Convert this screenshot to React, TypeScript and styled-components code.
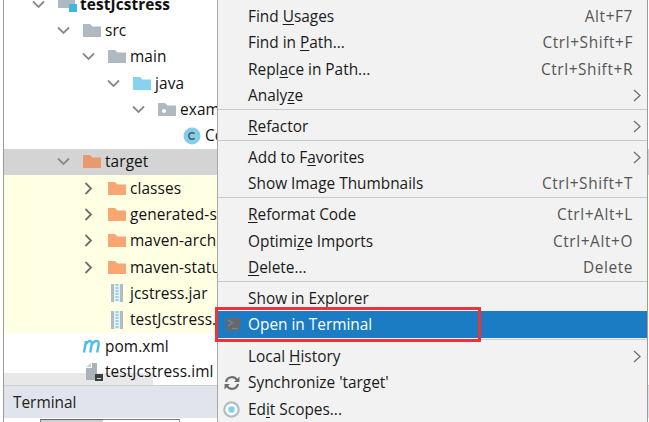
import React from 'react';
import styled, { createGlobalStyle } from 'styled-components';

const Global = createGlobalStyle`
  html, body { margin: 0; padding: 0; background: #fff; }
  body { font-family: "Open Sans", "Noto Sans", sans-serif; }
`;
const Stage = styled.div`
  position: relative; width: 649px; height: 422px; overflow: hidden; background: #fff;
  display: flex; flex-direction: column;
`;
const Project = styled.div`
  flex: 1; min-height: 0; margin-left: 3px; border-left: 1px solid #9a9a9a; margin-top: -9px;
  display: flex; flex-direction: column;
`;
const toneBg: Record<string, string> = {
  sel: '#d4d4d4',
  ex: '#ffffe4',
  scroll: 'linear-gradient(#e8e8e8, #e8e8e8) 0 14px / 149px 12px no-repeat',
};
const Row = styled.div<{ $tone?: string }>`
  height: ${p => p.$tone === 'scroll' ? 25.8 : 26.3}px; flex: none; display: flex; align-items: center;
  white-space: nowrap; overflow: hidden; box-sizing: border-box;
  padding-bottom: ${p => p.$tone === 'scroll' ? 1 : 0}px;
  background: ${p => (p.$tone && toneBg[p.$tone]) || 'transparent'};
`;
const Indent = styled.span<{ $l: number }>`
  flex: none; width: ${p => p.$l}px; display: flex; justify-content: flex-end; align-items: center;
`;
const Name = styled.span<{ $b?: boolean }>`
  font-size: 15.4px; color: #111; margin-left: 4px; letter-spacing: 0.1px; font-weight: ${p => p.$b ? 700 : 400};
`;
const TermBar = styled.div`
  height: 33px; flex: none; box-sizing: border-box; background: #e1e4ec; border-top: 1px solid #cfcfcf;
  display: flex; align-items: center; padding: 1px 0 0 9px; font-size: 15.4px; color: #222;
`;
const TermFoot = styled.div`
  flex: 1; min-height: 0; background: #fff; display: flex; padding: 1px 0 0 36px;
`;
const FootTab = styled.div`
  width: 62px; background: #d0d0d0; border-top: 1px solid #666; border-left: 1px solid #888;
`;
const FootField = styled.div`
  width: 76px; background: #fff; border-top: 1px solid #777; border-right: 1px solid #999;
`;
const Menu = styled.div`
  position: absolute; left: 217px; top: 0; width: 429px; height: 422px; box-sizing: content-box;
  background: #f2f2f2; border-left: 1px solid #a8a8a8; border-right: 1px solid #9a9a9a;
  display: flex; flex-direction: column; padding-top: 3.6px;
`;
const Item = styled.div<{ $active?: boolean }>`
  height: ${p => p.$active ? 26.8 : 26.2}px; margin-top: ${p => p.$active ? -0.6 : 0}px;
  flex: none; display: flex; align-items: center; font-size: 15.4px;
  color: ${p => p.$active ? '#fff' : '#1a1a1a'}; background: ${p => p.$active ? '#1b7bc3' : 'transparent'};
`;
const IconSlot = styled.span`
  flex: none; width: 30px; display: flex; justify-content: flex-end; padding-right: 8px; box-sizing: border-box;
`;
const Label = styled.span`flex: 1; white-space: nowrap;`;
const Short = styled.span`color: #555; padding-right: 14px; letter-spacing: 0.6px;`;
const Arrow = styled.span`flex: none; width: 12px; margin-right: 4px; display: flex; justify-content: center;`;
const Sep = styled.div<{ $tight?: boolean }>`
  flex: none; height: 1px; background: #c9c9c9;
  margin: ${p => p.$tight ? '1px 0 3.9px' : '0.6px 0 3.4px'};
`;
const Mark = styled.u`text-underline-offset: 2px;`;
const Highlight = styled.div`
  position: absolute; left: 215px; top: 307px; width: 266px; height: 35px; box-sizing: border-box;
  border: 3px solid #ee3338; pointer-events: none;
`;

const Chevron = ({ open }: { open?: boolean }) => (
  <svg width="13" height="13" viewBox="0 0 13 13" fill="none" stroke={open ? '#8a8a8a' : '#6e6e6e'} strokeWidth="1.8" style={{ marginRight: 13 }}>
    {open ? <path d="M1 3.5 L6.5 9 L12 3.5" /> : <path d="M3.5 1 L9 6.5 L3.5 12" />}
  </svg>
);
const Folder = ({ c, dot }: { c: string; dot?: boolean }) => (
  <svg width="18" height="13" viewBox="0 0 18 13" style={{ flex: 'none' }}>
    <path d="M0 0 H7 L9.5 2.5 H18 V13 H0 Z" fill={c} />
    {dot && <circle cx="6" cy="8" r="2" fill="#fff" />}
  </svg>
);
const Module = () => (
  <svg width="19" height="15" viewBox="0 0 19 15" style={{ flex: 'none', marginRight: -1 }}>
    <path d="M0 0 H7 L9 2.5 H17 V11 H0 Z" fill="#b0b9c1" />
    <rect x="11" y="7" width="8" height="8" fill="#40b6e0" />
  </svg>
);
const ClassIcon = () => (
  <svg width="18" height="18" viewBox="0 0 18 18" style={{ flex: 'none' }}>
    <circle cx="9" cy="9" r="8.5" fill="#84cfe8" />
    <path d="M11.5 6.8 A3.3 3.3 0 1 0 11.5 11.2" fill="none" stroke="#4a5a63" strokeWidth="1.5" />
  </svg>
);
const Jar = () => (
  <svg width="13" height="18" viewBox="0 0 13 18" style={{ flex: 'none', marginRight: 2 }}>
    <rect x="0" y="0" width="3" height="18" fill="#b4bcc2" />
    <rect x="9" y="0" width="3" height="18" fill="#b4bcc2" />
    <rect x="3" y="0" width="6" height="18" fill="#e6f3f8" />
    <path d="M4.5 1 H7.5 M4.5 4 H7.5 M4.5 7 H7.5 M4.5 10 H7.5 M4.5 13 H7.5 M4.5 16 H7.5" stroke="#7cc8e4" strokeWidth="1.5" />
  </svg>
);
const Maven = () => (
  <svg width="18" height="14" viewBox="0 0 18 14" style={{ flex: 'none' }}>
    <path d="M1 13.5 L3 2 M3.2 5 Q6 0.8 8 2.4 Q9.2 3.4 8.4 7 L7.2 13.5 M9.2 5 Q12 0.8 15 2.4 Q16.2 3.4 15.4 7 L14.2 13.5" fill="none" stroke="#4fbde8" strokeWidth="2.4" />
  </svg>
);
const Iml = () => (
  <svg width="17" height="19" viewBox="0 0 17 19" style={{ flex: 'none', marginRight: -2 }}>
    <path d="M0 6 L6 6 V1 H11 V18 H0 Z" fill="#aab3ba" />
    <path d="M5.2 5 L0 5 L5.2 1 Z" fill="#c9ced2" />
    <rect x="9" y="12" width="8" height="7" fill="#3c3f41" />
    <rect x="11" y="16" width="4" height="1" fill="#ddd" />
  </svg>
);
const TermIcon = () => (
  <svg width="14" height="13" viewBox="0 0 14 13">
    <rect width="14" height="13" fill="#686868" />
    <path d="M2 2 L6.5 5 L2 8" fill="none" stroke="#4f8fc4" strokeWidth="1.2" />
    <path d="M6 10.5 H12" stroke="#4f8fc4" strokeWidth="1.2" />
  </svg>
);
const SyncIcon = () => (
  <svg width="16" height="16" viewBox="0 0 16 16" fill="none" stroke="#6e6e6e" strokeWidth="2.2">
    <path d="M2 7 A6 6 0 0 1 13 5" />
    <path d="M14 9 A6 6 0 0 1 3 11" />
    <path d="M15.5 1.5 V7 H10 Z" fill="#6e6e6e" stroke="none" />
    <path d="M0.5 14.5 V9 H6 Z" fill="#6e6e6e" stroke="none" />
  </svg>
);
const ScopeIcon = () => (
  <svg width="17" height="17" viewBox="0 0 17 17">
    <circle cx="8.5" cy="8.5" r="7.2" fill="#fff" stroke="#afbcc5" strokeWidth="2.2" />
    <circle cx="8.5" cy="8.5" r="3.2" fill="#7fd0f0" />
  </svg>
);
const SubArrow = () => (
  <svg width="8" height="13" viewBox="0 0 8 13" fill="none" stroke="#6e6e6e" strokeWidth="1.3">
    <path d="M1 1 L7 6.5 L1 12" />
  </svg>
);

type T = { l: number; arrow?: 'open' | 'closed'; icon: React.ReactNode; name: string; tone?: string; b?: boolean };
const ORANGE = '#f9a672';
const GREY = '#b0b9c1';
const tree: T[] = [
  { l: 54, arrow: 'open', icon: <Module />, name: 'testJcstress', b: true },
  { l: 79, arrow: 'open', icon: <Folder c={GREY} />, name: 'src' },
  { l: 104, arrow: 'open', icon: <Folder c={GREY} />, name: 'main' },
  { l: 129, arrow: 'open', icon: <Folder c="#87d3ef" />, name: 'java' },
  { l: 154, arrow: 'open', icon: <Folder c={GREY} dot />, name: 'example' },
  { l: 179, icon: <ClassIcon />, name: 'ConcurrencyTest' },
  { l: 79, arrow: 'open', icon: <Folder c="#e79a70" />, name: 'target', tone: 'sel' },
  { l: 104, arrow: 'closed', icon: <Folder c={ORANGE} />, name: 'classes', tone: 'ex' },
  { l: 104, arrow: 'closed', icon: <Folder c={ORANGE} />, name: 'generated-sources', tone: 'ex' },
  { l: 104, arrow: 'closed', icon: <Folder c={ORANGE} />, name: 'maven-archiver', tone: 'ex' },
  { l: 104, arrow: 'closed', icon: <Folder c={ORANGE} />, name: 'maven-status', tone: 'ex' },
  { l: 107, icon: <Jar />, name: 'jcstress.jar', tone: 'ex' },
  { l: 107, icon: <Jar />, name: 'testJcstress.jar', tone: 'ex' },
  { l: 79, icon: <Maven />, name: 'pom.xml' },
  { l: 82, icon: <Iml />, name: 'testJcstress.iml', tone: 'scroll' },
];

export default function App() {
  return (
    <Stage>
      <Global />
      <Project>
        {tree.map(t => (
          <Row key={t.name} $tone={t.tone}>
            <Indent $l={t.l}>{t.arrow && <Chevron open={t.arrow === 'open'} />}</Indent>
            {t.icon}
            <Name $b={t.b}>{t.name}</Name>
          </Row>
        ))}
        <TermBar>Terminal</TermBar>
        <TermFoot><FootTab /><FootField /></TermFoot>
      </Project>
      <Menu>
        <Item><IconSlot /><Label>Find <Mark>U</Mark>sages</Label><Short>Alt+F7</Short></Item>
        <Item><IconSlot /><Label>Find in <Mark>P</Mark>ath...</Label><Short>Ctrl+Shift+F</Short></Item>
        <Item><IconSlot /><Label>Repl<Mark>a</Mark>ce in Path...</Label><Short>Ctrl+Shift+R</Short></Item>
        <Item><IconSlot /><Label>Analy<Mark>z</Mark>e</Label><Arrow><SubArrow /></Arrow></Item>
        <Sep />
        <Item><IconSlot /><Label><Mark>R</Mark>efactor</Label><Arrow><SubArrow /></Arrow></Item>
        <Sep />
        <Item><IconSlot /><Label>Add to F<Mark>a</Mark>vorites</Label><Arrow><SubArrow /></Arrow></Item>
        <Item><IconSlot /><Label>Show Image Thumbnails</Label><Short>Ctrl+Shift+T</Short></Item>
        <Sep />
        <Item><IconSlot /><Label><Mark>R</Mark>eformat Code</Label><Short>Ctrl+Alt+L</Short></Item>
        <Item><IconSlot /><Label>Optimi<Mark>z</Mark>e Imports</Label><Short>Ctrl+Alt+O</Short></Item>
        <Item><IconSlot /><Label><Mark>D</Mark>elete...</Label><Short>Delete</Short></Item>
        <Sep />
        <Item><IconSlot /><Label>Show in Explorer</Label></Item>
        <Item $active><IconSlot><TermIcon /></IconSlot><Label>Open in Terminal</Label></Item>
        <Sep $tight />
        <Item><IconSlot /><Label>Local <Mark>H</Mark>istory</Label><Arrow><SubArrow /></Arrow></Item>
        <Item><IconSlot><SyncIcon /></IconSlot><Label>Synchronize 'target'</Label></Item>
        <Item><IconSlot><ScopeIcon /></IconSlot><Label>Ed<Mark>i</Mark>t Scopes...</Label></Item>
      </Menu>
      <Highlight />
    </Stage>
  );
}
